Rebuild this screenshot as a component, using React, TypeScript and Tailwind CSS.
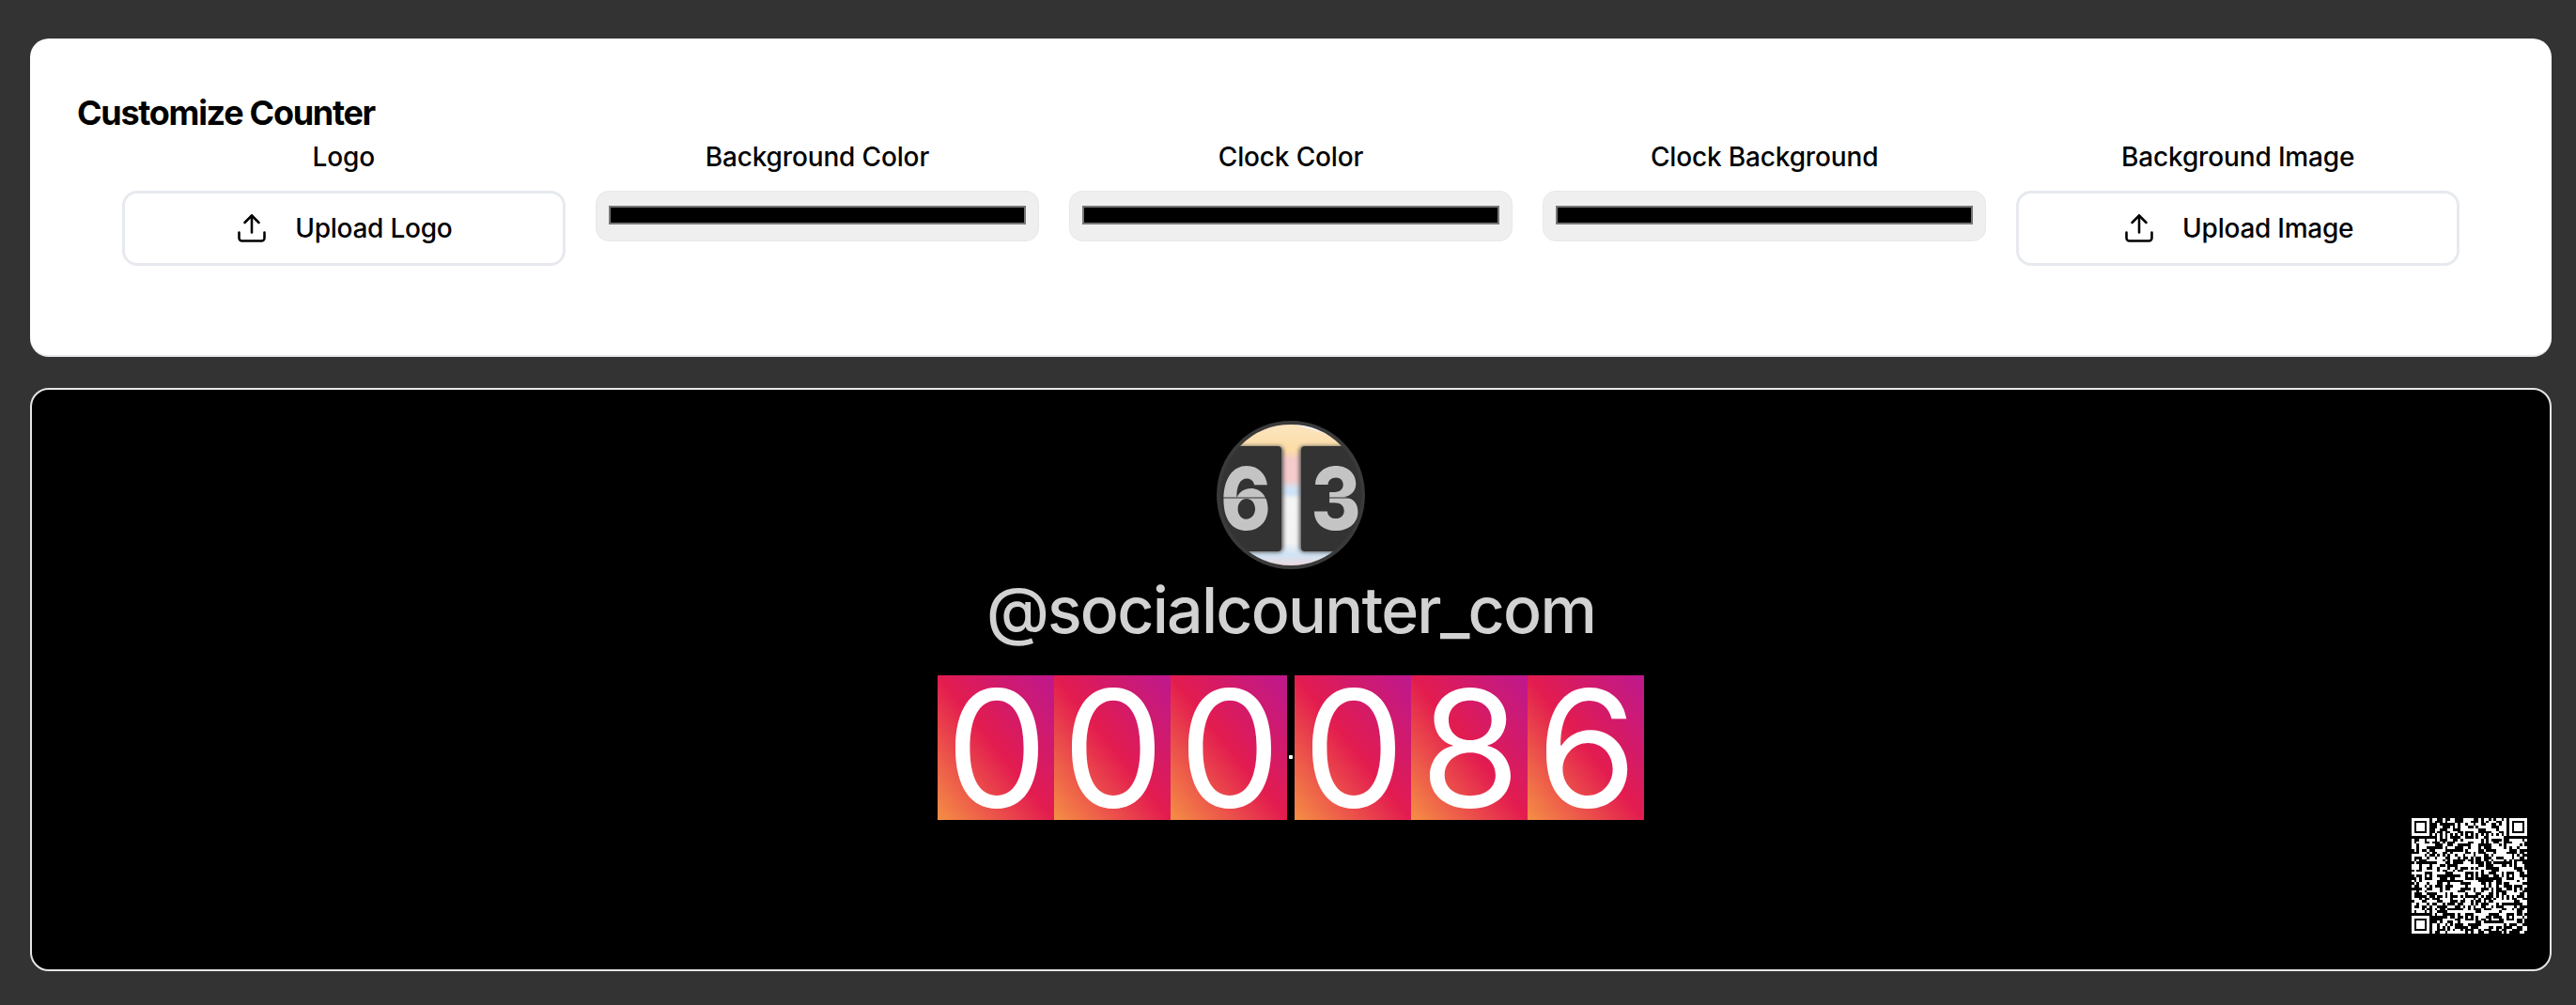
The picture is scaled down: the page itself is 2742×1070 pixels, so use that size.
import React from 'react';
import { Upload } from 'lucide-react';

const FONT = "font-['Inter','Noto_Sans',sans-serif]";

// pseudo QR, version 7 layout: 45 modules
const QR_SIZE = 45;

const buildQrPath = () => {
  let seed = 86163;
  const next = () => {
    seed = (seed * 1664525 + 1013904223) % 4294967296;
    return seed / 4294967296;
  };
  const cells: boolean[][] = [];
  for (let y = 0; y < QR_SIZE; y++) {
    const row: boolean[] = [];
    for (let x = 0; x < QR_SIZE; x++) row.push(next() > 0.5);
    cells.push(row);
  }
  const stamp = (cx: number, cy: number) => {
    for (let y = cy - 4; y <= cy + 4; y++) {
      for (let x = cx - 4; x <= cx + 4; x++) {
        if (x < 0 || y < 0 || x >= QR_SIZE || y >= QR_SIZE) continue;
        const d = Math.max(Math.abs(x - cx), Math.abs(y - cy));
        cells[y][x] = d === 3 || d <= 1;
      }
    }
  };
  // finders
  stamp(3, 3);
  stamp(41, 3);
  stamp(3, 41);
  // alignment
  const align = [
    [22, 6],
    [6, 22],
    [22, 22],
    [38, 22],
    [22, 38],
    [38, 38],
  ];
  align.forEach(([x, y]) => {
    for (let j = y - 2; j <= y + 2; j++) {
      for (let i = x - 2; i <= x + 2; i++) {
        const d = Math.max(Math.abs(i - x), Math.abs(j - y));
        cells[j][i] = d !== 1;
      }
    }
  });
  // timing
  for (let i = 8; i < QR_SIZE - 8; i++) {
    if (![20, 21, 22, 23, 24].includes(i)) {
      cells[6][i] = i % 2 === 0;
      cells[i][6] = i % 2 === 0;
    }
  }
  let d = '';
  cells.forEach((row, y) =>
    row.forEach((on, x) => {
      if (on) d += `M${x} ${y}h1v1h-1z`;
    }),
  );
  return d;
};

const QR_PATH = buildQrPath();

const UploadButton = ({ text }: { text: string }) => (
  <button className="flex h-[80px] w-full items-center justify-center gap-[28px] rounded-[16px] border-[3px] border-[#e6e9ee] bg-white text-[28px] font-medium tracking-[-0.25px] text-black">
    <Upload size={36} strokeWidth={1.7} />
    {text}
  </button>
);

const ColorInput = () => (
  <div className="flex h-[54px] w-full items-center rounded-[14px] border border-[#e8e8e8] bg-[#efefef] px-[13px] pb-[3px]">
    <div className="h-[20px] w-full border-2 border-[#767676] bg-black"></div>
  </div>
);

const Field = ({ label, children }: { label: string; children: React.ReactNode }) => (
  <div className="flex flex-col items-center">
    <div className="mb-[15px] text-[28px] leading-[42px] font-medium tracking-[-0.15px] text-black">{label}</div>
    {children}
  </div>
);

const Logo = () => (
  <svg width="158" height="158" viewBox="0 0 158 158">
    <defs>
      <clipPath id="logoClip">
        <circle cx="79" cy="79" r="77" />
      </clipPath>
      <linearGradient id="logoBg" x1="0" y1="0" x2="0" y2="1">
        <stop offset="0" stopColor="#fbe6c4" />
        <stop offset="0.2" stopColor="#fddca6" />
        <stop offset="0.26" stopColor="#f6cbcb" />
        <stop offset="0.4" stopColor="#f6cbcb" />
        <stop offset="0.46" stopColor="#cfe4f6" />
        <stop offset="0.49" stopColor="#cfe4f6" />
        <stop offset="0.53" stopColor="#f5f5f5" />
        <stop offset="0.82" stopColor="#f3f3f3" />
        <stop offset="0.9" stopColor="#cfe4f6" />
        <stop offset="1" stopColor="#f6d6d6" />
      </linearGradient>
      <filter id="logoBlur" x="-20%" y="-20%" width="140%" height="140%">
        <feGaussianBlur stdDeviation="2" />
      </filter>
    </defs>
    <g clipPath="url(#logoClip)">
      <rect width="158" height="158" fill="url(#logoBg)" />
      <path d="M70 0 L158 0 L158 26 Z" fill="#f7f7f7" />
      <rect x="-10" y="27" width="81" height="113" rx="5" fill="#555" filter="url(#logoBlur)" />
      <rect x="88" y="27" width="81" height="113" rx="5" fill="#555" filter="url(#logoBlur)" />
      <rect x="-10" y="27" width="79" height="112" rx="4" fill="#333" />
      <rect x="90" y="27" width="79" height="112" rx="4" fill="#333" />
      <text transform="translate(31 116) scale(0.88 1)" textAnchor="middle" fontFamily="Inter, sans-serif" fontWeight="800" fontSize="92" fill="#c4c4c4">
        6
      </text>
      <text transform="translate(127 116) scale(0.88 1)" textAnchor="middle" fontFamily="Inter, sans-serif" fontWeight="800" fontSize="92" fill="#c4c4c4">
        3
      </text>
      <rect x="0" y="81.5" width="69" height="1" fill="#333" />
      <rect x="90" y="81.5" width="68" height="1" fill="#333" />
    </g>
    <circle cx="79" cy="79" r="77" fill="none" stroke="#3a3a3a" strokeWidth="4" />
  </svg>
);

const Digit = ({ value }: { value: string }) => (
  <div className="flex h-[154px] w-[124px] items-center justify-center bg-[linear-gradient(to_top_right,#f58f45_0%,#e31c4f_50%,#bd188e_100%)] text-[172px] leading-none font-[420] tracking-[-2px] text-white">
    {value}
  </div>
);

const App: React.FC = () => {
  return (
    <div className={`${FONT} min-h-screen bg-[#333333] pt-[41px] pr-[26px] pl-[32px]`}>
      {/* Customize panel */}
      <div className="rounded-[20px] border-b-2 border-[#e5e7eb] bg-white pt-[54px] pb-[95px]">
        <h2 className="pl-[50px] text-[36px] leading-[51px] font-bold tracking-[-1.3px] text-black">Customize Counter</h2>
        <div className="grid grid-cols-5 gap-x-[32.5px] px-[98px]">
          <Field label="Logo">
            <UploadButton text="Upload Logo" />
          </Field>
          <Field label="Background Color">
            <ColorInput />
          </Field>
          <Field label="Clock Color">
            <ColorInput />
          </Field>
          <Field label="Clock Background">
            <ColorInput />
          </Field>
          <Field label="Background Image">
            <UploadButton text="Upload Image" />
          </Field>
        </div>
      </div>

      {/* Counter preview */}
      <div className="relative mt-[33px] flex h-[621px] flex-col items-center rounded-[20px] border-2 border-[#e5e5e5] bg-black pt-[33px]">
        <Logo />
        <div className="-mt-[1px] text-[68px] leading-[88px] font-[450] tracking-[-1.75px] text-[#d2d2d2]">@socialcounter_com</div>
        <div className="mt-[26px] flex items-center">
          <div className="flex">
            <Digit value="0" />
            <Digit value="0" />
            <Digit value="0" />
          </div>
          <div className="flex w-[8px] justify-center pt-[20px]">
            <div className="h-[4px] w-[4px] rounded-[1px] bg-white"></div>
          </div>
          <div className="flex">
            <Digit value="0" />
            <Digit value="8" />
            <Digit value="6" />
          </div>
        </div>
        <svg
          className="absolute right-[24px] bottom-[38px]"
          width="123"
          height="123"
          viewBox={`0 0 ${QR_SIZE} ${QR_SIZE}`}
          shapeRendering="crispEdges"
        >
          <path d={QR_PATH} fill="#fff" />
        </svg>
      </div>
    </div>
  );
};

export default App;
